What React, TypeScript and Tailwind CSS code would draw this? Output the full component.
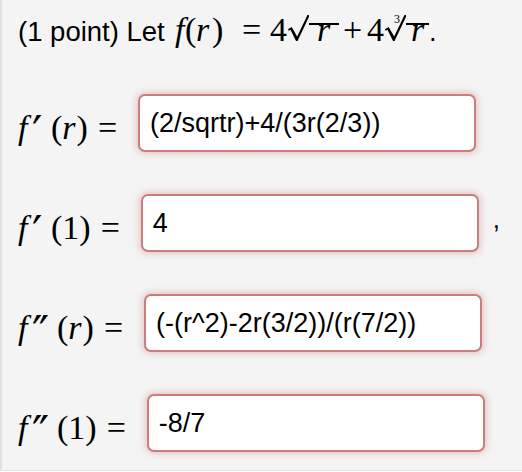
import React from "react";

const SERIF = "font-['Liberation_Serif','Times_New_Roman',serif]";
const SANS = "font-['Liberation_Sans',Arial,sans-serif]";

function Radical() {
  return (
    <svg viewBox="0 0 22 28" preserveAspectRatio="none" className="w-[21px] h-[26px] -mb-[8px] shrink-0" aria-hidden>
      <polygon
        points="0,15.4 3.8,13 9.6,23.2 20.4,0 22,0 22,1.8 10,28 8.4,28 2.6,16 0.7,16.9"
        fill="#000"
      />
    </svg>
  );
}

function Sqrt({ index, bodyClass, children }: { index?: string; bodyClass: string; children: React.ReactNode }) {
  return (
    <span className="relative inline-flex items-baseline shrink-0">
      {index && (
        <span className="absolute left-[9px] top-[-2px] text-[12px] leading-none not-italic">
          {index}
        </span>
      )}
      <Radical />
      <span className={`border-t-2 border-black leading-[10px] ${bodyClass}`}>{children}</span>
    </span>
  );
}

function Fn({ primes, arg }: { primes: number; arg: string }) {
  return (
    <span className={`${SERIF} inline-flex items-baseline text-[34px] leading-none`}>
      <span className="italic w-[15px]">f</span>
      <span
        className={`font-['DejaVu_Sans',sans-serif] text-[46px] relative top-[10px] ${
          primes === 2 ? "w-[13px]" : "w-[7px]"
        } -ml-[1px] tracking-[-4px]`}
      >
        {primes === 2 ? "″" : "′"}
      </span>
      <span className="ml-[12px]">(</span>
      <span className={arg === "r" ? "italic pr-[1px]" : ""}>{arg}</span>
      <span>)</span>
      <span className="ml-[10px]">=</span>
    </span>
  );
}

function Answer({ value }: { value: string }) {
  return (
    <div
      className={`${SANS} w-[338px] h-[58px] flex items-center rounded-[7px] border-2 border-[#c97d7d] bg-white pl-[10px] text-[27px] text-black shadow-[0_0_6px_2px_rgba(200,110,110,0.32)]`}
    >
      {value}
    </div>
  );
}

const ROWS = [
  { primes: 1, arg: "r", value: "(2/sqrtr)+4/(3r(2/3))" },
  { primes: 1, arg: "1", value: "4", comma: true },
  { primes: 2, arg: "r", value: "(-(r^2)-2r(3/2))/(r(7/2))" },
  { primes: 2, arg: "1", value: "-8/7" },
];

export default function App() {
  return (
    <div className="w-[522px] h-[472px] bg-white">
      <div className="h-[471px] bg-[#f4f4f4] border-l-2 border-b border-[#e2e2e2] pl-[16px] pt-[14px]">
        <div className={`${SANS} flex items-baseline text-[27.5px] leading-[32px] text-black`}>
          <span className="w-[157px] shrink-0">(1 point) Let</span>
          <span className={`${SERIF} inline-flex items-baseline text-[34px] shrink-0`}>
            <span className="italic w-[10px]">f</span>
            <span className="w-[11px]">(</span>
            <span className="italic w-[16px]">r</span>
            <span className="w-[30px]">)</span>
            <span className="w-[28px]">=</span>
            <span className="w-[18px]">4</span>
            <Sqrt bodyClass="w-[30px] pl-[8px]">
              <span className="italic">r</span>
            </Sqrt>
            <span className="w-[28px] pl-[4px]">+</span>
            <span className="w-[18px]">4</span>
            <Sqrt index="3" bodyClass="w-[23px] pl-[5px]">
              <span className="italic">r</span>
            </Sqrt>
          </span>
          <span>.</span>
        </div>

        <div className="mt-[46px] flex flex-col gap-[42px]">
          {ROWS.map((r, i) => (
            <div key={i} className="flex items-center">
              <Fn primes={r.primes} arg={r.arg} />
              <div className="ml-[21px]">
                <Answer value={r.value} />
              </div>
              {r.comma && (
                <span className={`${SANS} ml-[14px] -mt-[9px] text-[26px] leading-none`}>,</span>
              )}
            </div>
          ))}
        </div>
      </div>
    </div>
  );
}
